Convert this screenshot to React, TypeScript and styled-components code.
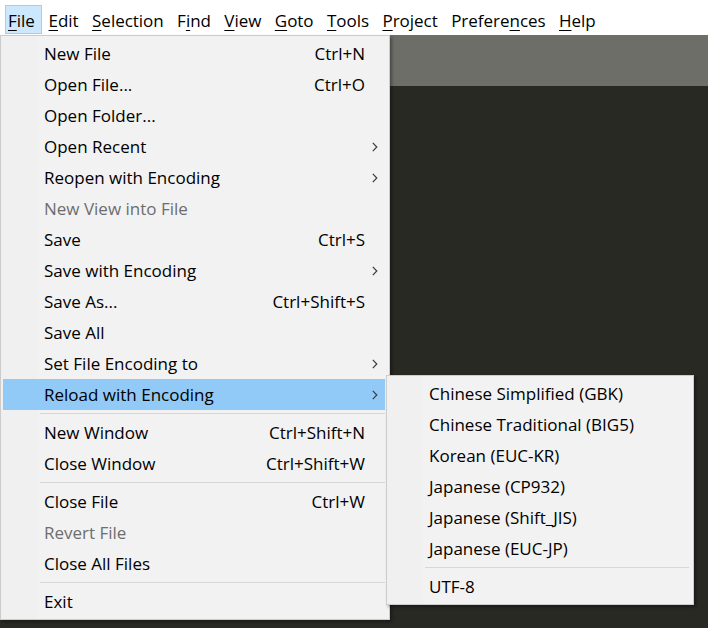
import React from "react";
import styled, { createGlobalStyle } from "styled-components";

const GlobalStyle = createGlobalStyle`
  html, body { margin: 0; padding: 0; }
  body {
    background: #282923;
    font-family: "Open Sans", "Noto Sans", "Liberation Sans", sans-serif;
    -webkit-font-smoothing: antialiased;
  }
`;

const FONT = `"Open Sans", "Noto Sans", "Liberation Sans", sans-serif`;

const Page = styled.div`
  position: relative;
  width: 708px;
  height: 628px;
  overflow: hidden;
  display: flex;
  flex-direction: column;
  background: #282923;
`;

const MenuBar = styled.div`
  height: 35px;
  flex: none;
  background: #ffffff;
  display: flex;
  align-items: flex-start;
  padding: 5px 0 0 0;
  box-sizing: border-box;
  font-family: ${FONT};
  font-size: 17px;
  color: #000;
`;

const BarItem = styled.div<{ $active?: boolean }>`
  height: 29px;
  box-sizing: border-box;
  display: flex;
  align-items: center;
  padding: ${(p) => (p.$active ? "1px 6px 0 2px" : "1px 5.7px 0")};
  margin-left: ${(p) => (p.$active ? "5px" : "0")};
  border: 1px solid ${(p) => (p.$active ? "#99d1ff" : "transparent")};
  background: ${(p) => (p.$active ? "#cce8ff" : "transparent")};
  letter-spacing: -0.02px;
  white-space: nowrap;
`;

const Key = styled.span`
  text-decoration: underline;
  text-decoration-thickness: 1px;
  text-underline-offset: 3px;
`;

const TabBand = styled.div`
  height: 51px;
  flex: none;
  background: #6e6e69;
`;

const Editor = styled.div`
  flex: 1;
  background: #282923;
`;

const Menu = styled.div<{ $width: number; $gutter: number }>`
  position: absolute;
  width: ${(p) => p.$width}px;
  box-sizing: border-box;
  border: 1px solid #cccccc;
  padding: 2px 4px 2px 2px;
  background: linear-gradient(
    to right,
    #f0f0f0 0,
    #f0f0f0 ${(p) => p.$gutter}px,
    #f2f2f2 ${(p) => p.$gutter}px
  );
  box-shadow: 2px 2px 3px rgba(0, 0, 0, 0.35);
  font-family: ${FONT};
  font-size: 17px;
  color: #000;
`;

const FileMenu = styled(Menu)`
  top: 35px;
  left: 0;
`;

const SubMenu = styled(Menu)`
  top: -4px;
  left: calc(100% + 1px);
  z-index: 2;
`;

const Row = styled.div<{ $hot?: boolean; $disabled?: boolean; $indent: number }>`
  position: relative;
  height: 31px;
  display: grid;
  grid-template-columns: 1fr auto 20px;
  align-items: center;
  padding-left: ${(p) => p.$indent}px;
  background: ${(p) => (p.$hot ? "#91c9f7" : "transparent")};
  color: ${(p) => (p.$disabled ? "#6d6d6d" : "#000")};
  white-space: nowrap;
`;

const Label = styled.span``;

const Shortcut = styled.span`
  text-align: right;
`;

const Arrow = styled.span`
  display: flex;
  justify-content: center;
  align-items: center;
`;

const Separator = styled.div<{ $indent: number }>`
  height: 7px;
  display: flex;
  align-items: center;
  padding-left: ${(p) => p.$indent}px;
  &::after {
    content: "";
    flex: 1;
    height: 1px;
    background: #d7d7d7;
  }
`;

const Chevron = () => (
  <svg width="6" height="10" viewBox="0 0 6 10">
    <polyline points="0.8,0.8 4.8,5 0.8,9.2" fill="none" stroke="#3b3b3b" strokeWidth="1.2" />
  </svg>
);

type Item =
  | { sep: true }
  | { sep?: false; label: string; shortcut?: string; sub?: boolean; disabled?: boolean; hot?: boolean };

const fileItems: Item[] = [
  { label: "New File", shortcut: "Ctrl+N" },
  { label: "Open File...", shortcut: "Ctrl+O" },
  { label: "Open Folder..." },
  { label: "Open Recent", sub: true },
  { label: "Reopen with Encoding", sub: true },
  { label: "New View into File", disabled: true },
  { label: "Save", shortcut: "Ctrl+S" },
  { label: "Save with Encoding", sub: true },
  { label: "Save As...", shortcut: "Ctrl+Shift+S" },
  { label: "Save All" },
  { label: "Set File Encoding to", sub: true },
  { label: "Reload with Encoding", sub: true, hot: true },
  { sep: true },
  { label: "New Window", shortcut: "Ctrl+Shift+N" },
  { label: "Close Window", shortcut: "Ctrl+Shift+W" },
  { sep: true },
  { label: "Close File", shortcut: "Ctrl+W" },
  { label: "Revert File", disabled: true },
  { label: "Close All Files" },
  { sep: true },
  { label: "Exit" },
];

const encItems: Item[] = [
  { label: "Chinese Simplified (GBK)" },
  { label: "Chinese Traditional (BIG5)" },
  { label: "Korean (EUC-KR)" },
  { label: "Japanese (CP932)" },
  { label: "Japanese (Shift_JIS)" },
  { label: "Japanese (EUC-JP)" },
  { sep: true },
  { label: "UTF-8" },
];

const bar: { pre: string; key: string; post: string }[] = [
  { pre: "", key: "F", post: "ile" },
  { pre: "", key: "E", post: "dit" },
  { pre: "", key: "S", post: "election" },
  { pre: "F", key: "i", post: "nd" },
  { pre: "", key: "V", post: "iew" },
  { pre: "", key: "G", post: "oto" },
  { pre: "", key: "T", post: "ools" },
  { pre: "", key: "P", post: "roject" },
  { pre: "Prefere", key: "n", post: "ces" },
  { pre: "", key: "H", post: "elp" },
];

const EncodingMenu = () => (
  <SubMenu $width={308} $gutter={36}>
    {encItems.map((it, i) =>
      it.sep ? (
        <Separator key={i} $indent={36} />
      ) : (
        <Row key={i} $indent={40}>
          <Label>{it.label}</Label>
          <Shortcut />
          <Arrow />
        </Row>
      )
    )}
  </SubMenu>
);

export default function App() {
  return (
    <>
      <GlobalStyle />
      <Page>
        <MenuBar>
          {bar.map((b, i) => (
            <BarItem key={i} $active={i === 0}>
              {b.pre}
              <Key>{b.key}</Key>
              {b.post}
            </BarItem>
          ))}
        </MenuBar>
        <TabBand />
        <Editor />
        <FileMenu $width={390} $gutter={37}>
          {fileItems.map((it, i) =>
            it.sep ? (
              <Separator key={i} $indent={37} />
            ) : (
              <Row key={i} $indent={41} $hot={it.hot} $disabled={it.disabled}>
                <Label>{it.label}</Label>
                <Shortcut>{it.shortcut}</Shortcut>
                <Arrow>{it.sub ? <Chevron /> : null}</Arrow>
                {it.hot ? <EncodingMenu /> : null}
              </Row>
            )
          )}
        </FileMenu>
      </Page>
    </>
  );
}
